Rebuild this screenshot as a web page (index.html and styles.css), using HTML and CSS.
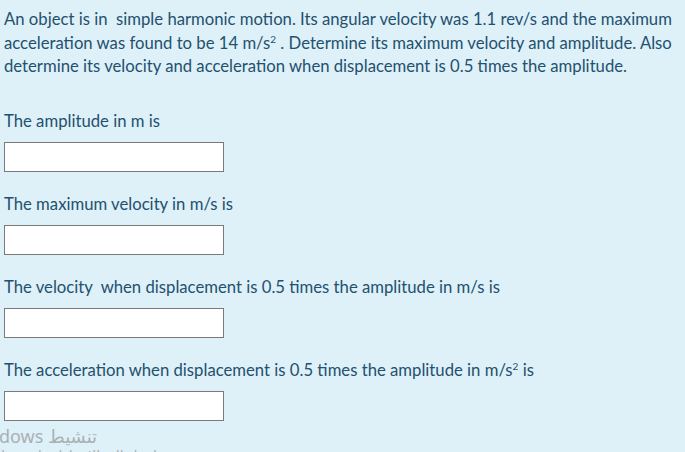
FILE: index.html
```html
<!DOCTYPE html>
<html>
<head>
<meta charset="utf-8">
<link rel="stylesheet" href="styles.css">
</head>
<body>
<div class="formulation">
  <p class="qtext">An object is in &nbsp;simple harmonic motion. Its angular velocity was 1.1 rev/s and the maximum acceleration was found to be 14 m/s<sup>2</sup> . Determine its maximum velocity and amplitude. Also determine its velocity and acceleration when displacement is 0.5 times the amplitude.</p>
  <div class="answers">
    <div class="part">
      <div class="label">The amplitude in m is</div>
      <input class="box" type="text">
    </div>
    <div class="part">
      <div class="label">The maximum velocity in m/s is</div>
      <input class="box" type="text">
    </div>
    <div class="part">
      <div class="label">The velocity &nbsp;when displacement is 0.5 times the amplitude in m/s is</div>
      <input class="box" type="text">
    </div>
    <div class="part">
      <div class="label">The acceleration when displacement is 0.5 times the amplitude in m/s<sup>2</sup> is</div>
      <input class="box" type="text">
    </div>
  </div>
  <div class="watermark">
    <div class="wm1">dows تنشيط</div>
    <div class="wm2">انتقل إلى الإعدادات لتنشيط</div>
  </div>
</div>
</body>
</html>
```

FILE: styles.css
```css
html, body {
  margin: 0;
  padding: 0;
  background: #def1f8;
  overflow: hidden;
}
.formulation {
  width: 685px;
  height: 452px;
  background: #def1f8;
  color: #24506f;
  font-family: Lato, "Noto Sans", sans-serif;
  font-size: 16.7px;
  padding: 0 4px;
  box-sizing: border-box;
  overflow: hidden;
}
.qtext {
  margin: 0;
  padding-top: 8px;
  line-height: 23.5px;
}
sup {
  font-size: 10px;
  line-height: 0;
  vertical-align: 6px;
}
.answers {
  display: flex;
  flex-direction: column;
  gap: 20px;
  margin-top: 30px;
}
.part {
  display: flex;
  flex-direction: column;
  gap: 9px;
}
.label {
  line-height: 24px;
}
.box {
  width: 220px;
  height: 30px;
  box-sizing: border-box;
  margin: 0;
  border: 1px solid #7a7a7a;
  background: #fff;
  padding: 0;
  outline: none;
}
.watermark {
  margin-top: 5px;
  margin-left: -5px;
  color: #a9b0b4;
  font-family: "Noto Sans", "DejaVu Sans", sans-serif;
  font-size: 18px;
  line-height: 20px;
}
.wm2 {
  font-size: 14px;
}
```
